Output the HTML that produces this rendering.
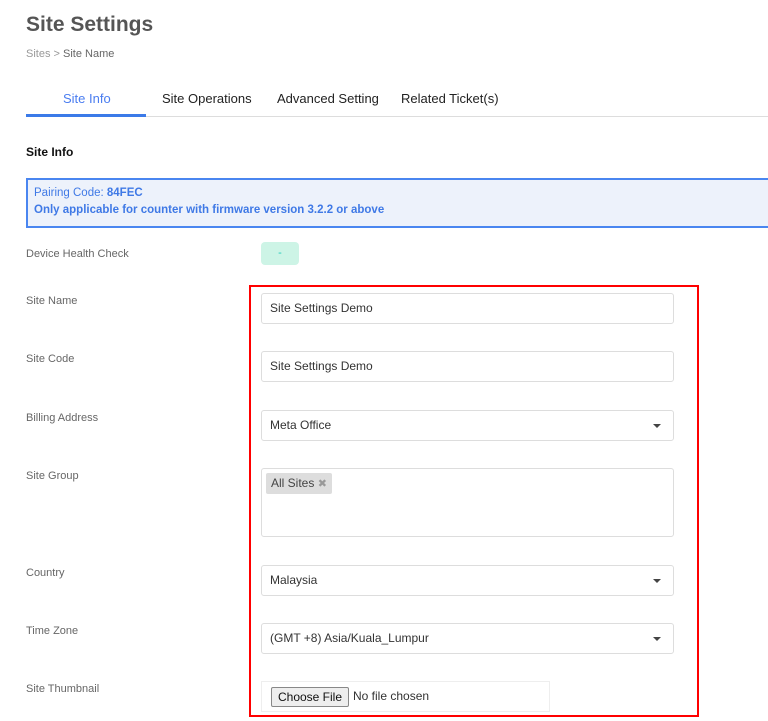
<!DOCTYPE html><html><head><style>
body{margin:0;width:768px;height:721px;overflow:hidden;background:#fff;font-family:"Liberation Sans",sans-serif;position:relative}
.a{position:absolute;white-space:nowrap}
.lbl{position:absolute;left:26px;font-size:11px;color:#666}
.in{position:absolute;left:261px;width:410px;height:29px;border:1px solid #ddd;border-radius:3px;font-size:12px;color:#333;line-height:29px;box-sizing:content-box;padding-left:8px;width:403px}
.car{position:absolute;right:12px;top:13px;border-left:4px solid transparent;border-right:4px solid transparent;border-top:4px solid #444}
</style></head><body>
<div class="a" style="left:26px;top:13px;font-size:21px;font-weight:bold;color:#555">Site Settings</div>
<div class="a" style="left:26px;top:48px;font-size:11px;color:#999">Sites &gt; <span style="color:#666">Site Name</span></div>
<div class="a" style="left:63px;top:91px;font-size:13px;color:#4a7df0">Site Info</div>
<div class="a" style="left:162px;top:91px;font-size:13px;color:#222">Site Operations</div>
<div class="a" style="left:277px;top:91px;font-size:13px;color:#222">Advanced Setting</div>
<div class="a" style="left:401px;top:91px;font-size:13px;color:#222">Related Ticket(s)</div>
<div class="a" style="left:26px;top:116px;width:742px;height:1px;background:#ddd"></div>
<div class="a" style="left:26px;top:114px;width:120px;height:3px;background:#3b7ae8"></div>
<div class="a" style="left:26px;top:145px;font-size:12px;font-weight:bold;color:#111">Site Info</div>
<div class="a" style="left:26px;top:178px;width:750px;height:46px;border:2px solid #4a86f0;background:#edf2fb"></div>
<div class="a" style="left:34px;top:187px;font-size:11.5px;color:#3f79e6">Pairing Code: <b>84FEC</b></div>
<div class="a" style="left:34px;top:204px;font-size:11.5px;color:#3f79e6;font-weight:bold">Only applicable for counter with firmware version 3.2.2 or above</div>
<div class="lbl" style="top:248px">Device Health Check</div>
<div class="a" style="left:261px;top:242px;width:38px;height:23px;background:#cdf4e6;border-radius:4px;color:#2cb;text-align:center;line-height:23px;font-size:11px">-</div>
<div class="lbl" style="top:295px">Site Name</div>
<div class="lbl" style="top:353px">Site Code</div>
<div class="lbl" style="top:412px">Billing Address</div>
<div class="lbl" style="top:470px">Site Group</div>
<div class="lbl" style="top:567px">Country</div>
<div class="lbl" style="top:625px">Time Zone</div>
<div class="lbl" style="top:683px">Site Thumbnail</div>
<div class="a" style="left:249px;top:285px;width:446px;height:428px;border:2px solid #f00"></div>
<div class="in" style="top:293px">Site Settings Demo</div>
<div class="in" style="top:351px">Site Settings Demo</div>
<div class="in" style="top:410px">Meta Office<div class="car"></div></div>
<div class="in" style="top:468px;height:67px;padding-left:0;width:411px"><span class="a" style="left:4px;top:4px;height:21px;line-height:21px;background:#ddd;border-radius:2px;padding:0 5px;font-size:12px;color:#444">All Sites <span style="color:#999;font-size:11px">✖</span></span></div>
<div class="in" style="top:565px">Malaysia<div class="car"></div></div>
<div class="in" style="top:623px">(GMT +8) Asia/Kuala_Lumpur<div class="car"></div></div>
<div class="a" style="left:261px;top:681px;width:287px;height:29px;border:1px solid #eee"></div>
<div class="a" style="left:271px;top:687px;width:76px;height:18px;border:1px solid #888;background:#eee;border-radius:2px;font-size:12px;line-height:18px;text-align:center;color:#111">Choose File</div>
<div class="a" style="left:353px;top:689px;font-size:12px;color:#333">No file chosen</div>
</body></html>
